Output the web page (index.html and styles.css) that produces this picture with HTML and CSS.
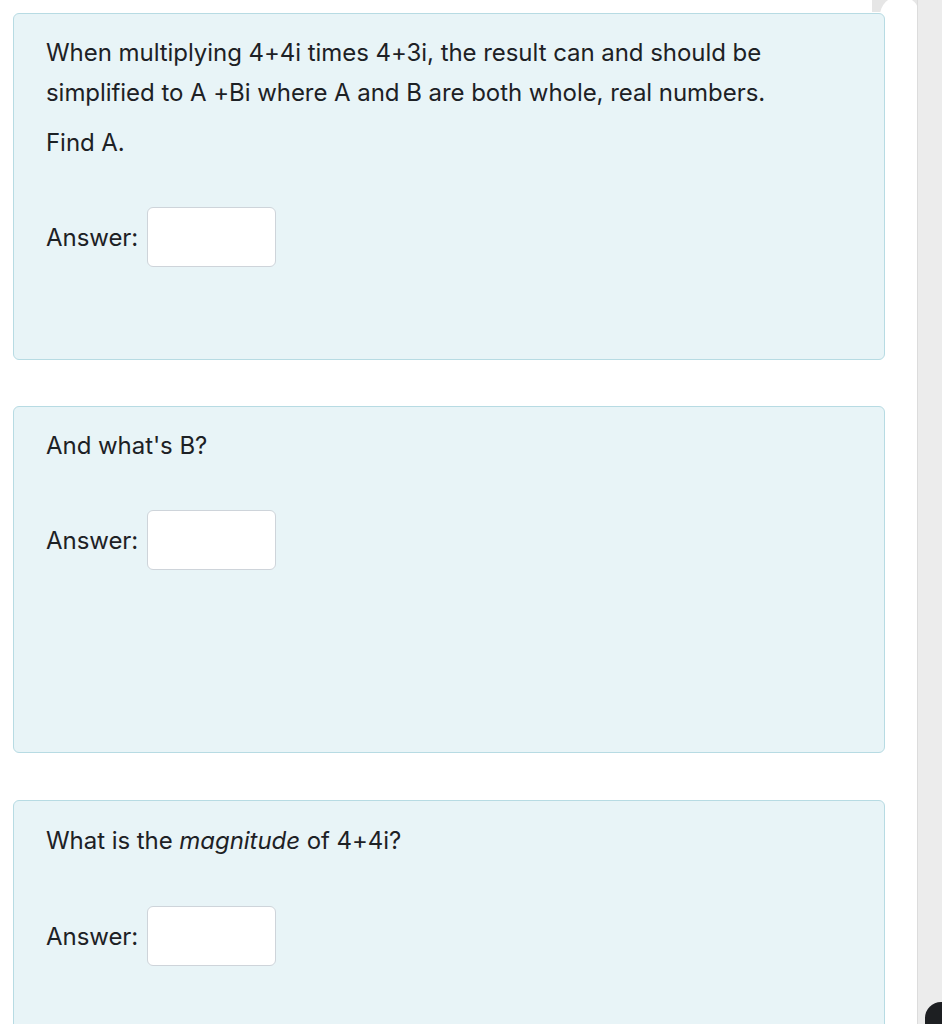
FILE: index.html
```html
<!DOCTYPE html>
<html>
<head>
  <meta charset="UTF-8"/>
  <title>Quiz</title>
  <link rel="stylesheet" href="styles.css">
</head>
<body>
  <div class="page">
    <div class="main">
      <div class="que">
        <p>When multiplying 4+4i times 4+3i, the result can and should be simplified to A +Bi where A and B are both whole, real numbers.</p>
        <p>Find A.</p>
        <div class="answer">
          <label for="q1">Answer:</label>
          <input id="q1" type="text">
        </div>
      </div>

      <div class="que">
        <p>And what's B?</p>
        <div class="answer">
          <label for="q2">Answer:</label>
          <input id="q2" type="text">
        </div>
      </div>

      <div class="que last">
        <p>What is the <em>magnitude</em> of 4+4i?</p>
        <div class="answer">
          <label for="q3">Answer:</label>
          <input id="q3" type="text">
        </div>
      </div>
    </div>
    <div class="side"></div>
  </div>

  <div class="tab-top"></div>
  <div class="corner"></div>
</body>
</html>
```

FILE: styles.css
```css
html, body {
  margin: 0;
  height: 100%;
  overflow: hidden;
}
body {
  font-family: Inter, "Noto Sans", sans-serif;
  color: #1d2125;
  background: #fff;
  letter-spacing: -0.05px;
}
.page {
  display: flex;
  height: 100%;
}
.main {
  width: 917px;
  padding: 13px 32px 0 13px;
  box-sizing: border-box;
}
.side {
  flex: 1;
  background: #ececec;
  border-left: 1px solid #dcdcdc;
}
.que {
  background: #e8f4f7;
  border: 1px solid #b7dbe3;
  border-radius: 6px;
  padding: 19px 32px 20px 32px;
  min-height: 347px;
  box-sizing: border-box;
  margin-bottom: 46px;
}
.que.last {
  margin-top: 47px;
  padding-top: 20px;
}
.que p {
  font-size: 24px;
  line-height: 40px;
  margin: 0 0 10px 0;
}
.answer {
  display: flex;
  align-items: center;
  gap: 9px;
  margin-top: 44px;
  font-size: 24px;
}
.que.last .answer {
  margin-top: 45px;
}
.answer input {
  width: 129px;
  height: 60px;
  box-sizing: border-box;
  border: 1px solid #ced4da;
  border-radius: 6px;
  background: #fff;
  font-size: 21px;
  padding: 6px 12px;
}
.tab-top {
  position: absolute;
  top: 0;
  left: 872px;
  width: 45px;
  height: 12px;
  background: #e6e6e6;
  overflow: hidden;
}
.tab-top::after {
  content: "";
  position: absolute;
  left: 8px;
  top: -4px;
  width: 40px;
  height: 40px;
  border-radius: 50%;
  background: #fff;
}
.corner {
  position: absolute;
  right: 0;
  bottom: 0;
  width: 17px;
  height: 22px;
  background: #1d1f22;
  border-top-left-radius: 16px;
}
```
